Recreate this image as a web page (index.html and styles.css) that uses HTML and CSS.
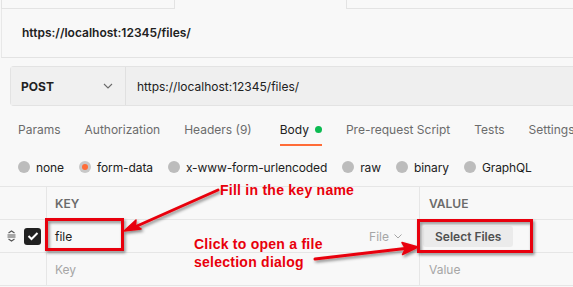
FILE: index.html
```html
<!DOCTYPE html>
<html>
<head>
<meta charset="utf-8">
<link rel="stylesheet" href="styles.css">
</head>
<body>
<div class="page">
  <div class="tabstrip">
    <div class="tab-left"></div>
    <div class="tab-active"></div>
    <div class="tab-right"></div>
  </div>
  <div class="header">https://localhost:12345/files/</div>
  <div class="reqbar">
    <div class="method">
      <span>POST</span>
      <svg class="chev" width="10" height="6" viewBox="0 0 10 6"><path d="M1 1 L5 5 L9 1" fill="none" stroke="#6b6b6b" stroke-width="1.1"/></svg>
    </div>
    <div class="url">https://localhost:12345/files/</div>
  </div>
  <div class="tabs">
    <span class="tab">Params</span>
    <span class="tab">Authorization</span>
    <span class="tab">Headers (9)</span>
    <span class="tab active">Body <i class="dot"></i></span>
    <span class="tab">Pre-request Script</span>
    <span class="tab">Tests</span>
    <span class="tab">Settings</span>
  </div>
  <div class="radios">
    <span class="radio"><i class="circle"></i>none</span>
    <span class="radio"><i class="circle on"></i>form-data</span>
    <span class="radio"><i class="circle"></i>x-www-form-urlencoded</span>
    <span class="radio"><i class="circle"></i>raw</span>
    <span class="radio"><i class="circle"></i>binary</span>
    <span class="radio"><i class="circle"></i>GraphQL</span>
  </div>
  <div class="table">
    <div class="row head">
      <div class="c0"></div>
      <div class="ckey">KEY</div>
      <div class="cval">VALUE</div>
    </div>
    <div class="row">
      <div class="c0">
        <svg class="handle" width="9" height="12" viewBox="0 0 9 12"><path d="M1.5 3 L4.5 1 L7.5 3 M0.5 5 H8.5 M0.5 7 H8.5 M1.5 9 L4.5 11 L7.5 9" fill="none" stroke="#555" stroke-width="1.1"/></svg>
        <span class="check"><svg width="12" height="10" viewBox="0 0 12 10"><path d="M1.5 5 L4.5 8 L10.5 2" fill="none" stroke="#fff" stroke-width="2"/></svg></span>
      </div>
      <div class="ckey keyfill"><span>file</span><span class="type">File <svg width="8" height="5" viewBox="0 0 8 5"><path d="M0.5 0.5 L4 4 L7.5 0.5" fill="none" stroke="#a6a6a6" stroke-width="1"/></svg></span></div>
      <div class="cval"><span class="btn">Select Files</span></div>
    </div>
    <div class="row">
      <div class="c0"></div>
      <div class="ckey ph">Key</div>
      <div class="cval ph">Value</div>
    </div>
  </div>

  <svg class="annot" width="573" height="287" viewBox="0 0 573 287">
    <defs>
      <filter id="sh" x="-20%" y="-20%" width="140%" height="160%">
        <feDropShadow dx="1.5" dy="2" stdDeviation="1.5" flood-color="#000" flood-opacity="0.45"/>
      </filter>
    </defs>
    <g filter="url(#sh)">
      <rect x="46.5" y="219.5" width="76" height="30" fill="none" stroke="#e8000b" stroke-width="3"/>
      <rect x="418.5" y="220.5" width="113" height="31" fill="none" stroke="#e8000b" stroke-width="3"/>
      <path d="M218 190 L137 226" stroke="#e8000b" stroke-width="3" stroke-linecap="round"/>
      <path d="M124 231 L136 220 L135.5 225.5 L141 229 Z" fill="#e8000b" stroke="#e8000b" stroke-width="1.5" stroke-linejoin="round"/>
      <path d="M315 259 L405 248.5" stroke="#e8000b" stroke-width="3" stroke-linecap="round"/>
      <path d="M418 247 L402 242.5 L405.5 248.5 L402.5 254.5 Z" fill="#e8000b" stroke="#e8000b" stroke-width="1.5" stroke-linejoin="round"/>
    </g>
  </svg>
  <div class="note note1">Fill in the key name</div>
  <div class="note note2">Click to open a file<br>selection dialog</div>
</div>
</body>
</html>
```
FILE: styles.css
```css
* { box-sizing: border-box; }
html, body { margin: 0; padding: 0; }
body {
  background: #f8f8f8;
  font-family: Inter, "Noto Sans", sans-serif;
  font-size: 12px;
  color: #212121;
  width: 573px;
  height: 287px;
  overflow: hidden;
}
.page { position: relative; width: 573px; height: 287px; overflow: hidden; }

.tabstrip { display: flex; height: 9px; }
.tab-left { width: 174px; border-left: 1px solid #e3e3e3; border-right: 1px solid #e3e3e3; border-bottom: 1px solid #e3e3e3; margin-left: 1px; }
.tab-active { width: 171px; }
.tab-right { flex: 1; border-left: 1px solid #e3e3e3; border-bottom: 1px solid #e3e3e3; }

.header {
  height: 49px;
  padding-left: 20px;
  display: flex;
  align-items: center;
  font-weight: 600;
  border-bottom: 1px solid #e3e3e3;
  border-left: 1px solid #e8e8e8;
  margin-left: 1px;
  padding-bottom: 2px;
}

.reqbar {
  margin: 8px 0 0 10px;
  height: 40px;
  display: flex;
  border: 1px solid #e3e3e3;
  border-right: none;
  border-radius: 4px 0 0 4px;
  background: #efefef;
}
.method {
  width: 115px;
  display: flex;
  align-items: center;
  justify-content: space-between;
  padding: 0 12px 0 10px;
  font-weight: 700;
  border-right: 1px solid #e0e0e0;
  background: #f0f0f0;
}
.url { flex: 1; display: flex; align-items: center; padding-left: 11px; }

.tabs {
  height: 42px;
  display: flex;
  align-items: center;
  padding-left: 18px;
  gap: 24px;
  color: #6b6b6b;
  white-space: nowrap;
  padding-top: 5px;
}
.tab { position: relative; display: flex; align-items: center; }
.tab.active { color: #212121; margin-left: 4px; }
.tab.active::after {
  content: "";
  position: absolute;
  left: 0; right: 0;
  top: 22px;
  height: 2px;
  background: #ff6c37;
}
.dot { display: inline-block; width: 7px; height: 7px; border-radius: 50%; background: #0cbb52; margin-left: 6px; }

.radios {
  height: 39px;
  display: flex;
  align-items: center;
  padding-left: 18px;
  gap: 15px;
  white-space: nowrap;
  border-bottom: 1px solid #e6e6e6;
  letter-spacing: -0.1px;
}
.radio { display: flex; align-items: center; }
.circle {
  display: inline-block;
  width: 12px; height: 12px;
  border-radius: 50%;
  background: #bcbcbc;
  margin-right: 6px;
  position: relative;
}
.circle.on { background: #c8c8c8; }
.circle.on::after {
  content: "";
  position: absolute;
  left: 3px; top: 3px;
  width: 6px; height: 6px;
  border-radius: 50%;
  background: #ff6c37;
}

.row { display: flex; height: 33px; border-bottom: 1px solid #e6e6e6; }
.c0 { width: 46px; display: flex; align-items: center; padding-left: 7px; gap: 8px; }
.ckey { width: 373px; border-left: 1px solid #e6e6e6; display: flex; align-items: center; padding-left: 8px; }
.cval { flex: 1; border-left: 1px solid #e6e6e6; display: flex; align-items: center; padding-left: 9px; }
.head .ckey, .head .cval { font-weight: 600; color: #6b6b6b; }
.check { width: 17px; height: 17px; border-radius: 3px; background: #212121; display: flex; align-items: center; justify-content: center; }
.keyfill { justify-content: space-between; padding-right: 17px; }
.type { color: #a6a6a6; display: flex; align-items: center; gap: 5px; }
.btn { background: #ebebeb; color: #505050; font-weight: 600; padding: 3px 12px; border-radius: 3px; margin-left: -6px; white-space: nowrap; }
.ph { color: #a6a6a6; }

.annot { position: absolute; left: 0; top: 0; pointer-events: none; }
.note {
  position: absolute;
  color: #e8000b;
  font-family: "Liberation Sans", Arial, sans-serif;
  font-weight: 700;
  font-size: 14px;
  letter-spacing: 0.25px;
  line-height: 18px;
  white-space: nowrap;
}
.note1 { left: 220px; top: 181px; }
.note2 { left: 194px; top: 235px; }
```
